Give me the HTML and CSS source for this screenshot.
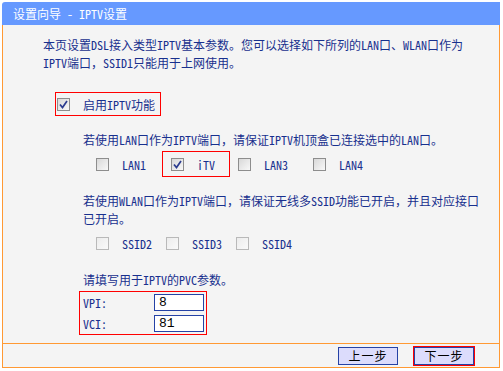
FILE: index.html
```html
<!DOCTYPE html>
<html lang="zh-CN">
<head>
  <meta charset="UTF-8">
  <title>设置向导 - IPTV设置</title>
  <link rel="stylesheet" href="styles.css">
</head>
<body>
  <div class="wizard">
    <div class="wizard-title">设置向导 - IPTV设置</div>

    <div class="wizard-body">
      <p class="intro">本页设置DSL接入类型IPTV基本参数。您可以选择如下所列的LAN口、WLAN口作为<br>IPTV端口，SSID1只能用于上网使用。</p>

      <label class="opt opt-main mark">
        <span class="cb on"><svg width="11" height="11" viewBox="0 0 11 11"><path d="M2 5.5 L4.5 8.5 L9 2" fill="none" stroke="#2b3b8f" stroke-width="1.7"/></svg></span>
        启用IPTV功能
      </label>

      <p class="note">若使用LAN口作为IPTV端口，请保证IPTV机顶盒已连接选中的LAN口。</p>
      <div class="ports lan">
        <label class="opt"><span class="cb"></span>LAN1</label>
        <label class="opt mark"><span class="cb on"><svg width="11" height="11" viewBox="0 0 11 11"><path d="M2 5.5 L4.5 8.5 L9 2" fill="none" stroke="#2b3b8f" stroke-width="1.7"/></svg></span>iTV</label>
        <label class="opt"><span class="cb"></span>LAN3</label>
        <label class="opt"><span class="cb"></span>LAN4</label>
      </div>

      <p class="note">若使用WLAN口作为IPTV端口，请保证无线多SSID功能已开启，并且对应接口<br>已开启。</p>
      <div class="ports ssid">
        <label class="opt off"><span class="cb"></span>SSID2</label>
        <label class="opt off"><span class="cb"></span>SSID3</label>
        <label class="opt off"><span class="cb"></span>SSID4</label>
      </div>

      <p class="note">请填写用于IPTV的PVC参数。</p>
      <div class="pvc mark">
        <span>VPI:</span><input type="text" value="8">
        <span>VCI:</span><input type="text" value="81">
      </div>
    </div>

    <div class="wizard-foot">
      <button>上一步</button>
      <button class="primary">下一步</button>
    </div>
  </div>
</body>
</html>
```

FILE: styles.css
```css
body {
  margin: 0;
  background: #fff;
  font-family: "Noto Sans Mono CJK SC", "Noto Sans CJK SC", sans-serif;
  font-size: 12px;
  color: #18308e;
}
.wizard {
  width: 498px;
  margin: 2px 0 0 2px;
}
.wizard-title {
  height: 23px;
  line-height: 23px;
  padding-left: 11px;
  background: #6699ff;
  color: #fff;
  border-top-left-radius: 3px;
}
.wizard-body {
  height: 318px;
  box-sizing: border-box;
  padding: 11px 10px 0 40px;
  background: #f4f4f4;
  border-left: 1px solid #ff9933;
  border-right: 1px solid #ff9933;
}
.intro,
.note {
  margin: 0;
  line-height: 18px;
}
.note {
  margin: 15px 0 0 40px;
}
.mark {
  border: 1px solid #ff0000;
  box-sizing: border-box;
}
.opt {
  display: flex;
  align-items: center;
  gap: 13px;
}
.opt-main {
  width: 106px;
  height: 24px;
  margin: 20px 0 0 12px;
  padding-left: 1px;
}
.cb {
  width: 13px;
  height: 13px;
  box-sizing: border-box;
  border: 1px solid #8d8d8d;
  background: linear-gradient(135deg, #d8d8d8, #f8f8f8);
  display: flex;
  align-items: center;
  justify-content: center;
}
.off .cb {
  border-color: #b9b9b9;
  background: linear-gradient(135deg, #ececec, #fafafa);
}
.ports {
  display: flex;
  align-items: center;
  height: 26px;
  margin: 2px 0 0 53px;
}
.lan .opt {
  width: 75px;
}
.lan .opt:first-child {
  width: 66px;
}
.lan .mark {
  width: 68px;
  height: 26px;
  padding-left: 8px;
  margin-right: 8px;
}
.ssid .opt {
  width: 70px;
}
.note + .ports.ssid {
  margin-top: 2px;
}
.pvc {
  width: 128px;
  margin: 2px 0 0 36px;
  padding: 2px 3px;
  display: grid;
  grid-template-columns: 71px 50px;
  row-gap: 4px;
  align-items: center;
}
.pvc input {
  width: 50px;
  height: 17px;
  box-sizing: border-box;
  border: 1px solid #2542a5;
  padding: 0 4px;
  font-family: "Liberation Mono", monospace;
  font-size: 13px;
  color: #000;
  background: #fff;
  outline: none;
}
.wizard-foot {
  height: 25px;
  box-sizing: border-box;
  border: 1px solid #ff9933;
  background: #f4f4f4;
  display: flex;
  justify-content: flex-end;
  align-items: center;
  gap: 16px;
  padding-right: 25px;
}
.wizard-foot button {
  width: 60px;
  height: 18px;
  padding: 0;
  border: 1px solid #2542a5;
  background: #dcdcfc;
  color: #000;
  font-family: "Noto Sans CJK SC", sans-serif;
  font-size: 12px;
  letter-spacing: 1px;
  line-height: 16px;
}
.wizard-foot .primary {
  outline: 1px solid #ff0000;
}
```
